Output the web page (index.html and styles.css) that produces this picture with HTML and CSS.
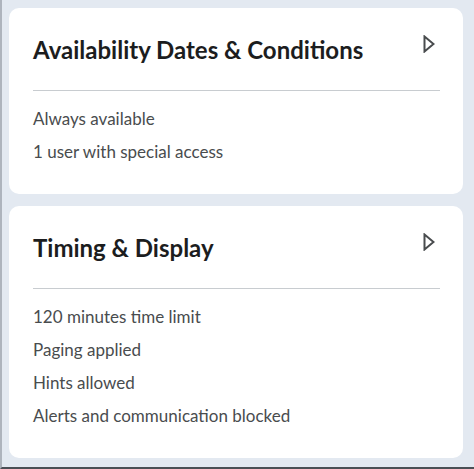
FILE: index.html
```html
<!DOCTYPE html>
<html lang="en">
<head>
<meta charset="utf-8">
<title>Settings summary</title>
<link rel="stylesheet" href="styles.css">
</head>
<body>
<div class="frame">
  <section class="card">
    <div class="card-head">
      <h2 class="card-title">Availability Dates &amp; Conditions</h2>
      <span class="chevron" aria-hidden="true">
        <svg width="12" height="18" viewBox="0 0 12 18"><path d="M1.5 1.5 L10.5 9 L1.5 16.5 Z" fill="none" stroke="#494c4e" stroke-width="2" stroke-linejoin="miter"/></svg>
      </span>
    </div>
    <hr class="divider">
    <ul class="items">
      <li>Always available</li>
      <li>1 user with special access</li>
    </ul>
  </section>
  <section class="card">
    <div class="card-head">
      <h2 class="card-title">Timing &amp; Display</h2>
      <span class="chevron" aria-hidden="true">
        <svg width="12" height="18" viewBox="0 0 12 18"><path d="M1.5 1.5 L10.5 9 L1.5 16.5 Z" fill="none" stroke="#494c4e" stroke-width="2" stroke-linejoin="miter"/></svg>
      </span>
    </div>
    <hr class="divider">
    <ul class="items">
      <li>120 minutes time limit</li>
      <li>Paging applied</li>
      <li>Hints allowed</li>
      <li>Alerts and communication blocked</li>
    </ul>
  </section>
</div>
</body>
</html>
```
FILE: styles.css
```css
* { box-sizing: border-box; }
html, body { margin: 0; padding: 0; }
body {
  background: #e3e9f1;
  font-family: Lato, "Open Sans", sans-serif;
}
.frame {
  height: 469px;
  border-left: 2px solid #aeb4bd;
  border-bottom: 2px solid #4a4f55;
  padding: 8px 11px 0 7px;
  display: flex;
  flex-direction: column;
  gap: 12px;
}
.card {
  background: #ffffff;
  border-radius: 10px;
  padding: 27px 23px 30px 24px;
}
.card-head {
  display: flex;
  justify-content: space-between;
  align-items: flex-start;
}
.card-title {
  margin: 0;
  font-size: 24px;
  line-height: 30px;
  font-weight: 700;
  color: #1c1d1e;
}
.chevron {
  display: block;
  margin: 0 5px 0 0;
  line-height: 0;
}
.divider {
  margin: 25px 0 0;
  border: 0;
  border-top: 1px solid #c8ccd0;
  height: 0;
}
.items {
  list-style: none;
  margin: 16px 0 0;
  padding: 0;
  display: flex;
  flex-direction: column;
  gap: 9px;
}
.items li {
  font-size: 17px;
  line-height: 24px;
  color: #494c4e;
}
```
